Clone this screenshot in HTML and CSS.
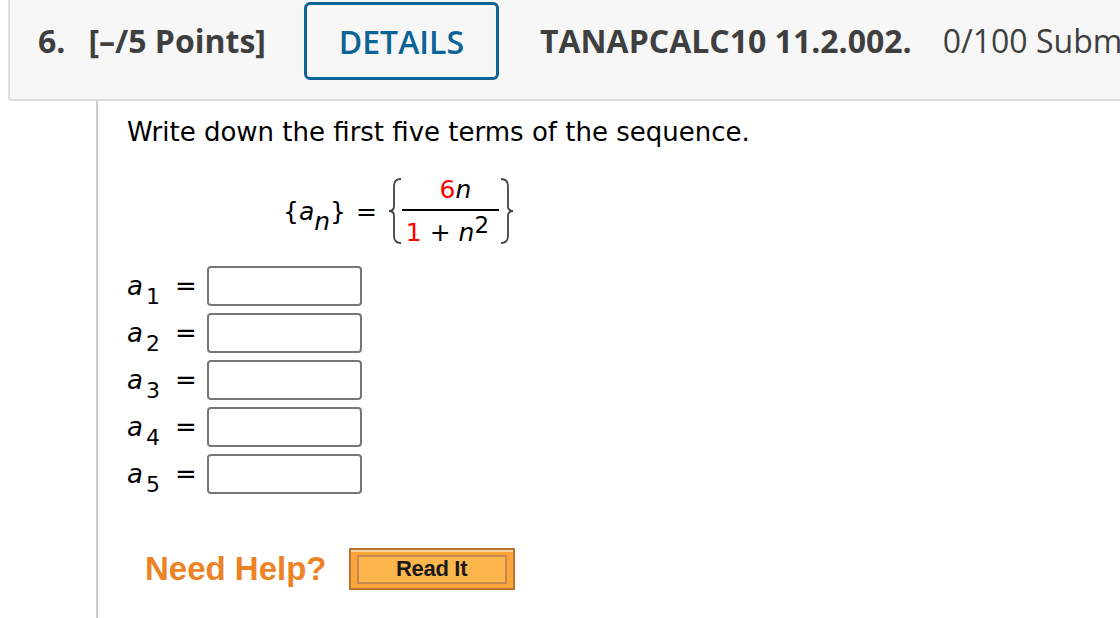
FILE: index.html
```html
<!DOCTYPE html>
<html lang="en">
<head>
  <meta charset="UTF-8">
  <title>Question 6</title>
  <link rel="stylesheet" href="styles.css">
</head>
<body>
  <div class="q-header">
    <span class="q-num">6.</span>
    <span class="q-points">[&ndash;/5 Points]</span>
    <button class="details-btn">DETAILS</button>
    <span class="q-code">TANAPCALC10 11.2.002.</span>
    <span class="q-subs">0/100 Submissions Used</span>
  </div>

  <div class="q-body">
    <p class="prompt">Write down the first five terms of the sequence.</p>

    <div class="formula">
      <span class="lhs">{<i>a</i><sub><i>n</i></sub>}</span>
      <span class="eq">=</span>
      <svg class="brace" width="16" height="68" viewBox="0 0 16 68">
        <path d="M14 2 Q7 2 7 9 L7 29 Q7 34 2 34 Q7 34 7 39 L7 59 Q7 66 14 66" fill="none" stroke="#444" stroke-width="1.8"/>
      </svg>
      <span class="frac">
        <span class="num"><span class="red">6</span><i>n</i></span>
        <span class="den"><span class="red">1</span> + <i>n</i><sup>2</sup></span>
      </span>
      <svg class="brace" width="16" height="68" viewBox="0 0 16 68">
        <path d="M2 2 Q9 2 9 9 L9 29 Q9 34 14 34 Q9 34 9 39 L9 59 Q9 66 2 66" fill="none" stroke="#444" stroke-width="1.8"/>
      </svg>
    </div>

    <div class="answers">
      <div class="answer-row"><span class="term"><i>a</i><sub>1</sub></span><span class="eq">=</span><input type="text"></div>
      <div class="answer-row"><span class="term"><i>a</i><sub>2</sub></span><span class="eq">=</span><input type="text"></div>
      <div class="answer-row"><span class="term"><i>a</i><sub>3</sub></span><span class="eq">=</span><input type="text"></div>
      <div class="answer-row"><span class="term"><i>a</i><sub>4</sub></span><span class="eq">=</span><input type="text"></div>
      <div class="answer-row"><span class="term"><i>a</i><sub>5</sub></span><span class="eq">=</span><input type="text"></div>
    </div>

    <div class="help">
      <span class="help-label">Need Help?</span>
      <button class="read-btn"><span>Read It</span></button>
    </div>
  </div>
</body>
</html>
```

FILE: styles.css
```css
* {
  box-sizing: border-box;
}

body {
  margin: 0;
  background-color: #fff;
  overflow: hidden;
  width: 1120px;
  height: 618px;
}

.q-header {
  margin-left: 8px;
  height: 101px;
  background-color: #f7f7f7;
  border-left: 2px solid #ddd;
  border-bottom: 2px solid #ddd;
  border-bottom-left-radius: 4px;
  display: flex;
  align-items: flex-start;
  padding: 2px 0 0 28px;
  font-family: "Open Sans", sans-serif;
  font-size: 32px;
  color: #3f3f3f;
  white-space: nowrap;
  overflow: hidden;
}

.q-header span {
  line-height: 78px;
  flex-shrink: 0;
}

.q-num {
  font-weight: bold;
  margin-right: 23px;
}

.q-points {
  font-weight: bold;
  margin-right: 38px;
}

.details-btn {
  flex-shrink: 0;
  width: 195px;
  height: 78px;
  border: 3px solid #0b6396;
  border-radius: 6px;
  background-color: #f7f7f7;
  color: #0b6396;
  font-family: "Open Sans", sans-serif;
  font-size: 32px;
  font-weight: 600;
  margin-right: 41px;
  padding: 0;
}

.q-code {
  font-weight: bold;
  margin-right: 31px;
}

.q-subs {
  font-weight: normal;
}

.q-body {
  margin-left: 96px;
  border-left: 2px solid #ccc;
  padding: 13px 0 0 29px;
  height: 517px;
  font-family: "DejaVu Sans", Verdana, sans-serif;
  color: #000;
}

.prompt {
  margin: 0;
  font-size: 26px;
  line-height: 36px;
}

.formula {
  display: flex;
  align-items: center;
  margin: 26px 0 0 156px;
  font-size: 25px;
  height: 70px;
}

.lhs {
  white-space: nowrap;
}

.lhs sub {
  font-size: 25px;
  vertical-align: -10px;
  line-height: 0;
}

.formula .eq {
  margin: 0 10px 0 10px;
}

.frac {
  display: inline-flex;
  flex-direction: column;
  align-items: center;
  margin: 0 0 0 -1px;
}

.frac .num {
  width: 97px;
  text-align: center;
  padding: 0 0 6px 10px;
  border-bottom: 2px solid #000;
  line-height: 26px;
}

.frac .den {
  padding: 9px 6px 0 0;
  line-height: 26px;
  white-space: nowrap;
}

.frac sup {
  font-size: 23px;
  vertical-align: 8px;
  line-height: 0;
}

.red {
  color: #f00;
}

.answers {
  margin-top: 20px;
  display: flex;
  flex-direction: column;
  gap: 7px;
}

.answer-row {
  display: flex;
  align-items: center;
  font-size: 26px;
  height: 40px;
}

.term {
  width: 48px;
  white-space: nowrap;
}

.term sub {
  font-size: 22px;
  vertical-align: -9px;
  line-height: 0;
  margin-left: 3px;
}

.answer-row .eq {
  width: 32px;
}

.answer-row input {
  width: 155px;
  height: 40px;
  border: 2px solid #777;
  border-radius: 4px;
  background-color: #fff;
}

.help {
  display: flex;
  align-items: center;
  margin: 54px 0 0 18px;
}

.help-label {
  font-family: "Liberation Sans", Arial, sans-serif;
  font-size: 33px;
  font-weight: bold;
  color: #ee8326;
  margin-right: 22px;
}

.read-btn {
  width: 166px;
  height: 42px;
  background-color: #fca43c;
  border: 2px solid #b8732f;
  box-shadow: inset 0 2px 0 #fcd0a0;
  padding: 5px 6px 4px 6px;
  display: flex;
}

.read-btn span {
  flex: 1;
  background-color: #fdb64b;
  border: 2px solid #c38a52;
  font-family: "Liberation Sans", Arial, sans-serif;
  font-size: 22px;
  font-weight: bold;
  color: #1a1a1a;
  line-height: 24px;
  letter-spacing: -0.3px;
}
```
